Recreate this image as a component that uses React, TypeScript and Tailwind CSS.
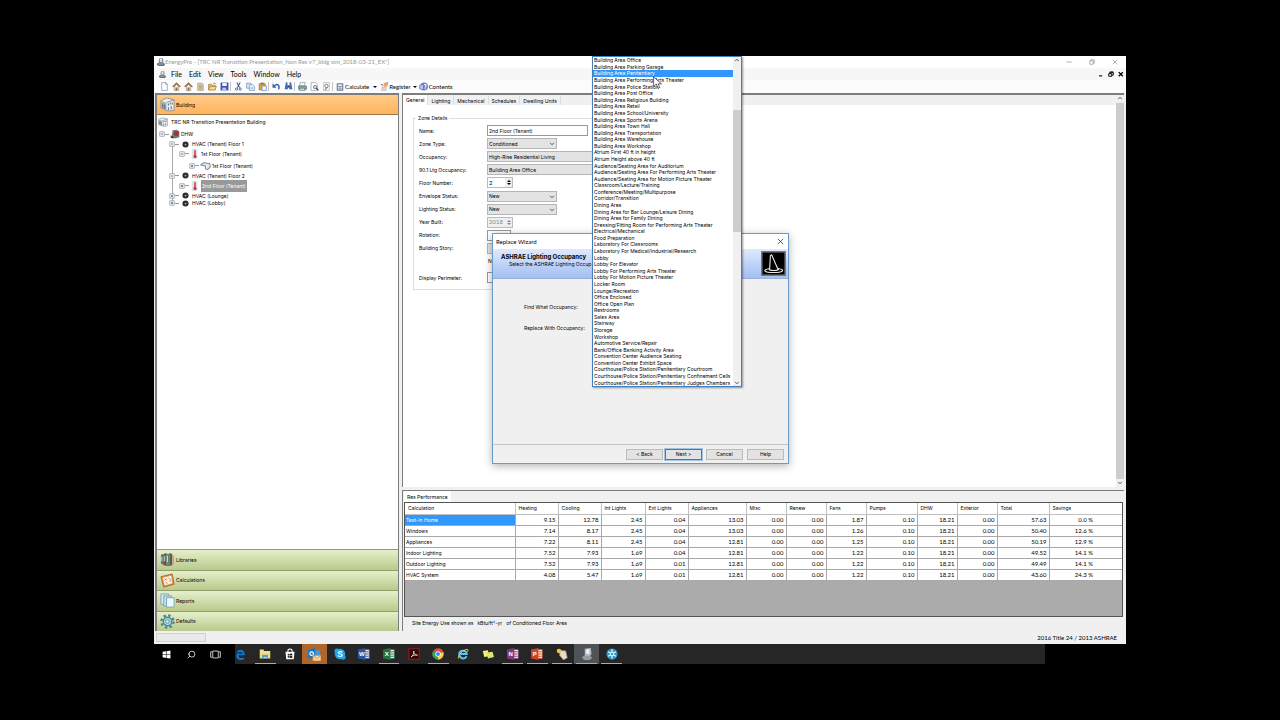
import type { ReactNode } from 'react'
import { Search } from 'lucide-react'

const occupancies = [
  'Building Area Office',
  'Building Area Parking Garage',
  'Building Area Penitentiary',
  'Building Area Performing Arts Theater',
  'Building Area Police Station',
  'Building Area Post Office',
  'Building Area Religious Building',
  'Building Area Retail',
  'Building Area School/University',
  'Building Area Sports Arena',
  'Building Area Town Hall',
  'Building Area Transportation',
  'Building Area Warehouse',
  'Building Area Workshop',
  'Atrium First 40 ft in height',
  'Atrium Height above 40 ft',
  'Audience/Seating Area for Auditorium',
  'Audience/Seating Area For Performing Arts Theater',
  'Audience/Seating Area for Motion Picture Theater',
  'Classroom/Lecture/Training',
  'Conference/Meeting/Multipurpose',
  'Corridor/Transition',
  'Dining Area',
  'Dining Area for Bar Lounge/Leisure Dining',
  'Dining Area for Family Dining',
  'Dressing/Fitting Room for Performing Arts Theater',
  'Electrical/Mechanical',
  'Food Preparation',
  'Laboratory For Classrooms',
  'Laboratory For Medical/Industrial/Research',
  'Lobby',
  'Lobby For Elevator',
  'Lobby For Performing Arts Theater',
  'Lobby For Motion Picture Theater',
  'Locker Room',
  'Lounge/Recreation',
  'Office Enclosed',
  'Office Open Plan',
  'Restrooms',
  'Sales Area',
  'Stairway',
  'Storage',
  'Workshop',
  'Automotive Service/Repair',
  'Bank/Office Banking Activity Area',
  'Convention Center Audience Seating',
  'Convention Center Exhibit Space',
  'Courthouse/Police Station/Penitentiary Courtroom',
  'Courthouse/Police Station/Penitentiary Confinement Cells',
  'Courthouse/Police Station/Penitentiary Judges Chambers',
]

const columns = [
  { name: 'Calculation', width: 'w-[110px]' },
  { name: 'Heating', width: 'w-[43px]' },
  { name: 'Cooling', width: 'w-[43px]' },
  { name: 'Int Lights', width: 'w-[44px]' },
  { name: 'Ext Lights', width: 'w-[43px]' },
  { name: 'Appliances', width: 'w-[58px]' },
  { name: 'Misc', width: 'w-[40px]' },
  { name: 'Renew', width: 'w-[40px]' },
  { name: 'Fans', width: 'w-[40px]' },
  { name: 'Pumps', width: 'w-[51px]' },
  { name: 'DHW', width: 'w-[40px]' },
  { name: 'Exterior', width: 'w-[40px]' },
  { name: 'Total', width: 'w-[52px]' },
  { name: 'Savings', width: '' },
]

const results = [
  ['Test-In Home', '9.15', '12.78', '2.45', '0.04', '13.03', '0.00', '0.00', '1.87', '0.10', '18.21', '0.00', '57.63', '0.0 %'],
  ['Windows', '7.14', '8.17', '2.45', '0.04', '13.03', '0.00', '0.00', '1.26', '0.10', '18.21', '0.00', '50.40', '12.6 %'],
  ['Appliances', '7.22', '8.11', '2.45', '0.04', '12.81', '0.00', '0.00', '1.25', '0.10', '18.21', '0.00', '50.19', '12.9 %'],
  ['Indoor Lighting', '7.52', '7.93', '1.69', '0.04', '12.81', '0.00', '0.00', '1.22', '0.10', '18.21', '0.00', '49.52', '14.1 %'],
  ['Outdoor Lighting', '7.52', '7.93', '1.69', '0.01', '12.81', '0.00', '0.00', '1.22', '0.10', '18.21', '0.00', '49.49', '14.1 %'],
  ['HVAC System', '4.08', '5.47', '1.69', '0.01', '12.81', '0.00', '0.00', '1.22', '0.10', '18.21', '0.00', '43.60', '24.3 %'],
]

const Svg = ({ className = 'size-[9px]', children }: { className?: string; children: ReactNode }) => (
  <svg viewBox="0 0 16 16" className={`shrink-0 ${className}`} fill="none" aria-hidden="true">
    {children}
  </svg>
)

const Chevron = ({ up = false, className = 'size-[6px]' }: { up?: boolean; className?: string }) => (
  <Svg className={className}>
    <path d={up ? 'M3 11l5-5 5 5' : 'M3 5l5 5 5-5'} stroke="#444" strokeWidth="2.4" />
  </Svg>
)

const AppIcon = ({ className }: { className?: string }) => (
  <Svg className={className}>
    <path d="M5 0h7l1 7-3 4H5L3 7z" fill="#8e99a5" />
    <path d="M6 1h4v7H6z" fill="#dfe5ea" />
    <path d="M0 11l4-2 8 0 4 3-2 4H4l-4-2z" fill="#5f6d79" />
    <path d="M3 12h9" stroke="#c6d0d8" strokeWidth="1.5" />
  </Svg>
)

const BuildingIcon = ({ className }: { className?: string }) => (
  <Svg className={className}>
    <path d="M1 4l6-3 8 2v11l-6 1-8-3z" fill="#e9edf0" stroke="#8a949c" />
    <path d="M1 4l6 2v9l-6-3z" fill="#aab3ba" />
    <path d="M7 6l8-3" stroke="#8a949c" />
    <path d="M9 7v2m2-3v2m2-2v2M9 11v3m3-4v3M3 7v5m2-4v5" stroke="#58646d" />
  </Svg>
)

const HomeIcon = ({ accent }: { accent: string }) => (
  <Svg>
    <path d="M4 8v7h8V8" fill="#e8dcc9" stroke="#8b7a67" />
    <path d="M1 8l7-7 7 7h-3L8 4 4 8z" fill={accent} stroke="#77502c" />
    <path d="M6.500 10h3v5h-3z" fill="#8a6a48" />
  </Svg>
)

const toolGroups: { label: string; icon: ReactNode }[][] = [
  [
    { label: 'New', icon: <Svg><path d="M3 1h7l3 3v11H3z" fill="#fff" stroke="#577a9c" /><path d="M10 1v3h3" stroke="#577a9c" /></Svg> },
    { label: 'New Building', icon: <HomeIcon accent="#c47a3a" /> },
    { label: 'Building Wizard', icon: <HomeIcon accent="#8a8d4a" /> },
    { label: 'Library', icon: <Svg><path d="M3 2h8l2 2v11H3z" fill="#d9ccb0" stroke="#968a70" /><path d="M5 6h6M5 8h6M5 10h6M5 12h6" stroke="#a4946f" /></Svg> },
    { label: 'Open', icon: <Svg><path d="M1 4h5l1 2h6v8H1z" fill="#e8b54a" stroke="#94712a" /><path d="M1 14l3-6h11l-3 6z" fill="#fbdc86" stroke="#94712a" /><path d="M9 3c2-2 4-1 5 1" stroke="#333" /></Svg> },
    { label: 'Save', icon: <Svg><path d="M1 1h14v14H1z" fill="#3f50b4" /><path d="M4 2h8v5H4z" fill="#fff" /><path d="M4 10h7v5H4z" fill="#b9c4ee" /></Svg> },
  ],
  [
    { label: 'Cut', icon: <Svg><path d="M5 1l5 9M11 1L6 10" stroke="#31507d" strokeWidth="1.800" /><circle cx="4.500" cy="12.500" r="2" stroke="#2e5cb5" strokeWidth="1.500" /><circle cx="11" cy="12.500" r="2" stroke="#2e5cb5" strokeWidth="1.500" /></Svg> },
    { label: 'Copy', icon: <Svg><path d="M1 2h7l2 2v7H1z" fill="#dce8fa" stroke="#4c72b8" /><path d="M6 5h6l3 3v7H6z" fill="#f3f8ff" stroke="#4c72b8" /><path d="M8 10h5M8 12h5" stroke="#6d94d8" /></Svg> },
    { label: 'Paste', icon: <Svg><path d="M2 3h11v11H2z" fill="#dba33f" stroke="#8e6522" /><path d="M5 1h5v3H5z" fill="#777" /><path d="M7 7h8v8H7z" fill="#eef4ff" stroke="#5471a6" /></Svg> },
  ],
  [
    { label: 'Undo', icon: <Svg><path d="M4 7c5-5 10-2 8 6" stroke="#2f61b8" strokeWidth="2.500" /><path d="M1 2v8h7z" fill="#2f61b8" /></Svg> },
    { label: 'Find', icon: <Svg><path d="M3 3h3l1 10H1zM10 3h3l2 10H9z" fill="#3b6ac0" /><path d="M6 6h4v4H6z" fill="#1f427f" /><path d="M3 1h3v2H3zM10 1h3v2h-3z" fill="#20396c" /></Svg> },
  ],
  [
    { label: 'Print', icon: <Svg><path d="M4 1h9l-2 6H3z" fill="#fff" stroke="#66808c" /><path d="M1 7h14v6H1z" fill="#8ba6ab" stroke="#476068" /><path d="M3 11h9v4H3z" fill="#cfe5ce" stroke="#476068" /></Svg> },
    { label: 'Print Preview', icon: <Svg><path d="M2 1h8l3 3v11H2z" fill="#fff" stroke="#7d8790" /><circle cx="9" cy="9" r="3" fill="#c5dcec" stroke="#3d4d58" /><path d="M11 11l4 4" stroke="#333" strokeWidth="2" /></Svg> },
    { label: 'Page Setup', icon: <Svg><path d="M3 1h10v14H3z" fill="#fff" stroke="#99a" /><circle cx="8" cy="7" r="3" stroke="#667" strokeWidth="1.500" /><path d="M10 9L5 14" stroke="#c2763a" strokeWidth="2" /></Svg> },
  ],
]

const Toolbar = () => (
  <div className="flex h-[13px] items-center pl-1 font-[Lato,sans-serif] text-[6px]">
    {toolGroups.map((group, i) => (
      <div key={i} className="flex items-center">
        {group.map((tool) => (
          <button key={tool.label} type="button" aria-label={tool.label} className="flex w-3 justify-center">
            {tool.icon}
          </button>
        ))}
        <span className="mr-px h-[9px] w-px bg-[#c5c5c5]" />
      </div>
    ))}
    <button type="button" className="flex items-center">
      <span className="flex w-[11px] justify-center">
        <Svg className="size-2">
          <path d="M2 1h12v14H2z" fill="#8e9bb0" stroke="#5d6a80" />
          <path d="M4 3h8v3H4z" fill="#e7eefb" />
          <path d="M4 9h8M4 12h8" stroke="#fff" strokeWidth="1.500" strokeDasharray="2 1" />
        </Svg>
      </span>
      Calculate
    </button>
    <span className="ml-1 border-x-2 border-t-2 border-x-transparent border-t-black" />
    <button type="button" className="ml-[3px] flex items-center">
      <Svg>
        <circle cx="10" cy="5" r="4" fill="#e8a56d" />
        <path d="M4 9l7 1-1 6H3z" fill="#dedbe6" stroke="#a4a0b0" />
        <path d="M2 4l3 2M12 1l2 1" stroke="#c95533" strokeWidth="2" />
      </Svg>
      Register
    </button>
    <span className="ml-[2px] border-x-2 border-t-2 border-x-transparent border-t-black" />
    <button type="button" className="ml-[2px] flex items-center gap-px">
      <Svg>
        <circle cx="9" cy="8" r="7" fill="#6f86cf" />
        <path d="M1 6l7-2v10l-7-2z" fill="#b9c6f0" stroke="#4a5ca8" />
        <path d="M9 5c4-2 5 2 2 4v1m0 1v2" stroke="#fff" strokeWidth="1.800" />
      </Svg>
      Contents
    </button>
  </div>
)

const TitleBar = () => (
  <header className="font-[Lato,sans-serif] text-[6px]">
    <div className="flex h-3 items-center bg-white pl-[3px] text-[#999]">
      <AppIcon className="size-2" />
      <span>EnergyPro - [TRC NR Transition Presentation_Non Res v7_bldg sim_2018-03-21_EX*]</span>
      <div className="ml-auto flex">
        <button type="button" aria-label="Minimize" className="flex w-[23px] justify-center">
          <Svg className="size-[6px]"><path d="M1 8h14" stroke="#999" strokeWidth="2" /></Svg>
        </button>
        <button type="button" aria-label="Restore" className="flex w-[23px] justify-center">
          <Svg className="size-[6px]"><path d="M2 5h9v9H2zM5 5V2h9v9h-3" stroke="#999" strokeWidth="2" /></Svg>
        </button>
        <button type="button" aria-label="Close" className="flex w-[23px] justify-center">
          <Svg className="size-[6px]"><path d="M2 2l12 12M14 2L2 14" stroke="#999" strokeWidth="2" /></Svg>
        </button>
      </div>
    </div>
    <div className="flex h-3 items-center bg-[#f7f7f7] pl-[5px]">
      <AppIcon className="size-[7px]" />
      <nav className="ml-[5px] flex gap-[7px] text-[7px]">
        {['File', 'Edit', 'View', 'Tools', 'Window', 'Help'].map((item) => (
          <button key={item} type="button">{item}</button>
        ))}
      </nav>
      <div className="ml-auto flex gap-[4px] pr-[2px]">
        <button type="button" aria-label="Minimize document">
          <Svg className="size-[6px]"><path d="M3 13h8" stroke="#000" strokeWidth="3" /></Svg>
        </button>
        <button type="button" aria-label="Restore document">
          <Svg className="size-[6px]"><path d="M2 7h8v7H2zM5 7V3h9v8h-4M5 3h9" stroke="#000" strokeWidth="2.500" /></Svg>
        </button>
        <button type="button" aria-label="Close document">
          <Svg className="size-[6px]"><path d="M2 3l11 11M13 3L2 14" stroke="#000" strokeWidth="3.500" /></Svg>
        </button>
      </div>
    </div>
  </header>
)

const Fan = () => (
  <Svg className="size-[7px]">
    <circle cx="8" cy="8" r="7" fill="#2d2d2d" />
    <circle cx="8" cy="8" r="2" fill="#aaa" />
  </Svg>
)

const Thermometer = () => (
  <Svg className="size-[10px]">
    <path d="M3 0h9v16H3z" fill="#dfe5ee" />
    <path d="M8 2v9" stroke="#d23b2e" strokeWidth="2.500" />
    <circle cx="8" cy="12" r="2.500" fill="#c9352b" />
  </Svg>
)

const Expander = ({ open = false }: { open?: boolean }) => (
  <span className="flex shrink-0 items-center">
    <Svg className="size-[6px]">
      <path d="M2 2h12v12H2z" fill="#fff" stroke="#8b96a5" strokeWidth="2" />
      <path d={open ? 'M5 8h6' : 'M5 8h6M8 5v6'} stroke="#33415c" strokeWidth="2" />
    </Svg>
    <span className="h-px w-1 bg-[#999]" />
  </span>
)

const treeRows: { label: string; row: string; icon: ReactNode; open?: boolean; selected?: boolean }[] = [
  {
    label: 'DHW',
    row: 'h-3 pl-[2px] gap-px',
    open: true,
    icon: (
      <Svg className="size-[10px]">
        <path d="M4 2l7-1 4 3v9l-7 2-5-3z" fill="#6e7b80" />
        <circle cx="10" cy="7" r="4" fill="#a8312e" />
        <path d="M1 10l6 3-2 2-4-1z" fill="#3c474c" />
      </Svg>
    ),
  },
  { label: 'HVAC (Tenant) Floor 1', row: 'h-2 pl-3 gap-[3px]', open: true, icon: <Fan /> },
  { label: '1st Floor (Tenant)', row: 'h-[11px] pl-[22px] gap-px', open: true, icon: <Thermometer /> },
  {
    label: '1st Floor (Tenant)',
    row: 'h-[13px] pl-[32px] gap-px',
    icon: (
      <Svg className="size-[11px]">
        <path d="M1 7l4-3 9 1 1 5-4 4-3-1V9z" fill="#e6eaee" stroke="#7c8d9b" strokeWidth="1.500" />
      </Svg>
    ),
  },
  { label: 'HVAC (Tenant) Floor 2', row: 'h-[7px] pl-3 gap-[3px]', open: true, icon: <Fan /> },
  { label: '2nd Floor (Tenant)', row: 'h-[13px] pl-[22px] gap-px', selected: true, icon: <Thermometer /> },
  { label: 'HVAC (Lounge)', row: 'h-[7px] pl-3 gap-[3px]', icon: <Fan /> },
  { label: 'HVAC (Lobby)', row: 'h-2 pl-3 gap-[3px]', icon: <Fan /> },
]

const sections = [
  {
    name: 'Libraries',
    icon: (
      <Svg className="size-[15px]">
        <path d="M1 3l3-1v12l-3-2z" fill="#4d6e7d" />
        <path d="M4 2l3-1v14l-3-1z" fill="#8c3f2f" />
        <path d="M7 2h3v13H7z" fill="#4b8e78" />
        <path d="M10 1l3 1v12l-3 1z" fill="#6b5a44" />
        <path d="M13 3l2 1v8l-2 2z" fill="#c9a684" />
        <path d="M2 5v5M5 4v6M8 4v7" stroke="#d5dfe2" />
      </Svg>
    ),
  },
  {
    name: 'Calculations',
    icon: (
      <Svg className="size-[15px]">
        <path d="M1 4l12-3 2 11-11 3z" fill="#e0994a" stroke="#a96a28" />
        <path d="M3 5l9-2 1 8-8 2z" fill="#fbf3e6" />
        <path d="M5 6l2 2m0-2L5 8m4-3l2 2M6 10l2 1m2-2l2-1" stroke="#c0705a" />
      </Svg>
    ),
  },
  {
    name: 'Reports',
    icon: (
      <Svg className="size-[15px]">
        <path d="M1 1h8v11H1z" fill="#d7ecf2" stroke="#79a6b5" />
        <path d="M4 3h8v11H4z" fill="#c2e0e8" stroke="#79a6b5" />
        <path d="M7 5h8v10H7z" fill="#eef8fa" stroke="#79a6b5" />
      </Svg>
    ),
  },
  {
    name: 'Defaults',
    icon: (
      <Svg className="size-[15px]">
        <circle cx="8" cy="8" r="6.500" stroke="#4a8795" strokeWidth="2.500" strokeDasharray="2.600 2.500" />
        <circle cx="8" cy="8" r="4.500" fill="#b8e0e6" stroke="#4a8795" strokeWidth="1.500" />
        <circle cx="8" cy="8" r="2" fill="#e4efc9" stroke="#4a8795" />
      </Svg>
    ),
  },
]

const Sidebar = () => (
  <aside className="flex w-[244px] shrink-0 flex-col border-t-2 border-r border-l-2 border-[#7d7d7d] bg-white">
    <button
      type="button"
      className="flex h-5 shrink-0 items-center gap-px border-b border-[#9b7b4d] bg-gradient-to-b from-[#ffcb87] to-[#ffb35c] pl-[3px]"
    >
      <BuildingIcon className="size-[15px]" />
      Building
    </button>
    <ul role="tree" className="relative flex-1 pt-px">
      <li role="treeitem" className="flex h-3 items-center gap-[3px] pl-px">
        <BuildingIcon className="size-[10px]" />
        TRC NR Transition Presentation Building
      </li>
      <span className="absolute top-[30px] left-[15px] h-[58px] w-px bg-[#aaa]" />
      {treeRows.map((node, i) => (
        <li key={i} role="treeitem" aria-selected={!!node.selected} className={`relative flex items-center ${node.row}`}>
          <Expander open={node.open} />
          {node.icon}
          {node.selected ? (
            <span className="bg-[#999] px-px py-[2px] text-white">{node.label}</span>
          ) : (
            <span>{node.label}</span>
          )}
        </li>
      ))}
    </ul>
    <div className="flex h-[82px] shrink-0 flex-col">
      {sections.map((section) => (
        <button
          key={section.name}
          type="button"
          className="flex flex-1 items-center gap-px border-t border-[#8f9e6c] bg-gradient-to-b from-[#e6efcb] to-[#b9ca8c] pl-[3px]"
        >
          {section.icon}
          {section.name}
        </button>
      ))}
    </div>
  </aside>
)

const Field = ({ id, label, children }: { id: string; label: string; children?: ReactNode }) => (
  <div className="flex flex-1 items-center">
    <label htmlFor={id} className="w-[68px] shrink-0">{label}</label>
    {children}
  </div>
)

const Dropdown = ({ id, value, width = 'w-[70px]' }: { id: string; value: string; width?: string }) => (
  <div className={`relative ${width}`}>
    <select id={id} className="block h-[11px] w-full appearance-none border border-[#b5b5b5] bg-[#e3e3e3] px-px">
      <option>{value}</option>
    </select>
    <Chevron className="pointer-events-none absolute top-[3px] right-[2px] size-[6px]" />
  </div>
)

const Spinner = ({ id, value, disabled = false }: { id: string; value: string; disabled?: boolean }) => (
  <div className={`flex h-[11px] w-[26px] border border-[#bbb] ${disabled ? 'bg-[#f0f0f0] text-[#888]' : 'bg-white'}`}>
    <input id={id} defaultValue={value} disabled={disabled} className="w-[17px] px-px font-[Lato,sans-serif] text-[6px] outline-none" />
    <span className="flex w-[7px] flex-col items-center justify-center gap-px bg-[#eee]">
      <span className="border-x-2 border-b-2 border-x-transparent border-b-current" />
      <span className="border-x-2 border-t-2 border-x-transparent border-t-current" />
    </span>
  </div>
)

const ZonePanel = () => (
  <section className="flex min-h-0 flex-1 border-t-2 border-l border-[#7d7d7d]">
    <div className="flex flex-1 flex-col bg-white">
      <div role="tablist" className="flex h-[10px] shrink-0 items-end bg-[#f0f0f0]">
        {['General', 'Lighting', 'Mechanical', 'Schedules', 'Dwelling Units'].map((tab, i) => (
          <button
            key={tab}
            type="button"
            role="tab"
            aria-selected={i === 0}
            className={`border-r border-[#ddd] px-[3px] ${i === 0 ? 'h-[10px] bg-white' : 'h-[9px]'}`}
          >
            {tab}
          </button>
        ))}
      </div>
      <fieldset className="mt-[9px] ml-[10px] w-[320px] border border-[#dedede] px-[5px] pb-[5px]">
        <legend className="-ml-[3px] px-[2px]">Zone Details</legend>
        <div className="flex h-[146px] flex-col pt-[2px]">
          <Field id="zone-name" label="Name:">
            <input id="zone-name" defaultValue="2nd Floor (Tenant)" className="h-[11px] w-[101px] border border-[#999] px-px outline-none" />
          </Field>
          <Field id="zone-type" label="Zone Type:">
            <Dropdown id="zone-type" value="Conditioned" />
          </Field>
          <Field id="zone-occupancy" label="Occupancy:">
            <Dropdown id="zone-occupancy" value="High-Rise Residential Living" width="w-[180px]" />
          </Field>
          <Field id="zone-ltg" label="90.1 Ltg Occupancy:">
            <Dropdown id="zone-ltg" value="Building Area Office" width="w-[180px]" />
          </Field>
          <Field id="zone-floor" label="Floor Number:">
            <Spinner id="zone-floor" value="2" />
          </Field>
          <Field id="zone-envelope" label="Envelope Status:">
            <Dropdown id="zone-envelope" value="New" />
          </Field>
          <Field id="zone-lighting" label="Lighting Status:">
            <Dropdown id="zone-lighting" value="New" />
          </Field>
          <Field id="zone-year" label="Year Built:">
            <Spinner id="zone-year" value="2018" disabled />
          </Field>
          <Field id="zone-rotation" label="Rotation:">
            <input id="zone-rotation" className="h-[11px] w-[24px] border border-[#999]" />
          </Field>
          <Field id="zone-story" label="Building Story:">
            <Dropdown id="zone-story" value="" />
          </Field>
          <div className="flex flex-1 items-center pl-[69px]">N</div>
        </div>
        <div className="flex h-4 flex-col pt-[3px]">
          <Field id="zone-perimeter" label="Display Perimeter:">
            <input id="zone-perimeter" className="h-[11px] w-[40px] border border-[#999]" />
          </Field>
        </div>
      </fieldset>
    </div>
    <div className="flex w-2 flex-col items-center bg-[#f0f0f0]">
      <Chevron up />
      <div className="mt-[2px] w-full flex-1 bg-[#cdcdcd]" />
      <Chevron className="my-px size-[6px]" />
    </div>
  </section>
)

const cellTone = (row: number, col: number) => {
  if (col > 0) return 'text-right font-[Lato,sans-serif] text-[6px]'
  return row === 0 ? 'bg-[#3297fd] text-white' : ''
}

const ResultsPanel = () => (
  <section className="mt-[3px] flex h-[141px] shrink-0 flex-col border-t border-l border-[#7d7d7d]">
    <div role="tablist" className="flex h-[11px] shrink-0 pl-px">
      <button type="button" role="tab" aria-selected className="bg-white px-[3px]">Res Performance</button>
    </div>
    <div className="mx-px min-h-0 flex-1 border border-[#555] bg-[#ababab]">
      <table className="w-full table-fixed border-collapse bg-white">
        <thead>
          <tr className="h-[11px]">
            {columns.map((column) => (
              <th key={column.name} className={`border-r border-b border-[#c0c0c0] py-0 pl-[3px] text-left font-normal last:border-r-0 ${column.width}`}>
                {column.name}
              </th>
            ))}
          </tr>
        </thead>
        <tbody>
          {results.map((row, r) => (
            <tr key={row[0]} className="h-[11px]">
              {row.map((cell, c) => (
                <td
                  key={c}
                  className={`border-r border-b border-[#a8a8a8] py-0 pr-[2px] pl-px last:border-r-0 last:pr-[29px] ${cellTone(r, c)}`}
                >
                  {cell}
                </td>
              ))}
            </tr>
          ))}
        </tbody>
      </table>
    </div>
    <p className="flex h-[14px] shrink-0 items-center gap-1 pb-[3px] pl-[9px]">
      <span>Site Energy Use shown as</span>
      <span>kBtu/ft²-yr</span>
      <span>of Conditioned Floor Area</span>
    </p>
  </section>
)

const WizardDialog = () => (
  <div
    role="dialog"
    aria-label="Replace Wizard"
    className="absolute top-[177px] left-[338px] flex h-[231px] w-[297px] flex-col border border-[#6b9bc8] bg-[#f0f0f0] shadow-[0_2px_8px_rgba(0,0,0,0.3)]"
  >
    <div className="flex h-[15px] shrink-0 items-center bg-white pr-1 pl-[3px] font-[Lato,sans-serif] text-[6px]">
      Replace Wizard
      <button type="button" aria-label="Close" className="ml-auto">
        <Svg className="size-[7px]"><path d="M2 2l12 12M14 2L2 14" stroke="#333" strokeWidth="1.800" /></Svg>
      </button>
    </div>
    <div className="flex h-[30px] shrink-0 items-center justify-between border-b border-[#9db1d8] bg-gradient-to-b from-[#dfe9fd] to-[#a3bff3] pr-[2px] pl-2">
      <div className="pb-[6px]">
        <h2 className="text-[6px] leading-[8px] font-bold">ASHRAE Lighting Occupancy</h2>
        <p className="pl-2 leading-[7px]">Select the ASHRAE Lighting Occup</p>
      </div>
      <Svg className="size-[25px]">
        <path d="M0 0h16v16H0z" fill="#777" />
        <path d="M1 1h14v14H1z" fill="#000" />
        <path d="M5.500 12L6 3l.8-.6L11 12M5.500 11.200c-5 1-3.500 2.600 2.500 2.600s8-1.600 3-2.600M5 11.800c2 1 4 1 6.500 0" stroke="#e8e8e8" strokeWidth=".7" />
      </Svg>
    </div>
    <div className="flex-1 pt-[24px] pl-[31px]">
      <p className="h-[21px]">Find What Occupancy:</p>
      <p>Replace With Occupancy:</p>
    </div>
    <div className="flex h-[19px] shrink-0 items-center justify-end gap-1 border-t border-[#c4c4c4] pr-1">
      <button type="button" className="-mr-[2px] h-[11px] w-[37px] border border-[#bbb] bg-[#e3e3e3]">&lt; Back</button>
      <button type="button" className="h-[11px] w-[37px] border border-[#2d7fd3] bg-[#e3e3e3] ring-1 ring-[#2d7fd3]/40">Next &gt;</button>
      <button type="button" className="h-[11px] w-[37px] border border-[#bbb] bg-[#e3e3e3]">Cancel</button>
      <button type="button" className="h-[11px] w-[37px] border border-[#bbb] bg-[#e3e3e3]">Help</button>
    </div>
  </div>
)

const OccupancyList = () => (
  <div className="absolute top-0 left-[438px] flex h-[331px] w-[150px] border border-[#3f7fbd] bg-white shadow-[1px_1px_2px_rgba(0,0,0,0.4)]">
    <ul role="listbox" aria-label="Replace With Occupancy" className="flex min-w-0 flex-1 flex-col">
      {occupancies.map((name, i) => (
        <li
          key={name}
          role="option"
          aria-selected={i === 2}
          className={`flex min-h-0 flex-1 items-center pl-px whitespace-nowrap ${i === 2 ? 'bg-[#3297fd] text-white' : ''}`}
        >
          {name}
        </li>
      ))}
    </ul>
    <div className="flex w-2 flex-col items-center bg-[#f0f0f0]">
      <Chevron up />
      <div className="mt-[47px] h-[122px] w-full bg-[#cdcdcd]" />
      <Chevron className="mt-auto size-[6px]" />
    </div>
    <Svg className="absolute top-[19px] left-[58px] size-[14px]">
      <path d="M3 1v11l3-3 2 5 2-1-2-4h4z" fill="#fff" stroke="#222" strokeWidth=".8" />
    </Svg>
  </div>
)

const OfficeIcon = ({ letter, color }: { letter: string; color: string }) => (
  <Svg className="size-[12px]">
    <path d="M8 2h7v12H8z" fill="#f3f3f3" stroke={color} />
    <path d="M10 5h4M10 8h4M10 11h4" stroke={color} strokeWidth="1.300" />
    <path d="M0 2l10-2v16L0 14z" fill={color} />
    <text x="5" y="11" textAnchor="middle" fontSize="8" fontWeight="700" fontFamily="Liberation Sans" fill="#fff">{letter}</text>
  </Svg>
)

const taskbarItems: { name: string; icon: ReactNode; state?: string }[] = [
  { name: 'Start', icon: <Svg className="size-[9px]"><path d="M1 3l6-1v5.500H1zM8 2l7-1v6.500H8zM1 8.500h6V14l-6-1zM8 8.500h7V15l-7-1z" fill="#fff" /></Svg> },
  { name: 'Search', icon: <Search className="size-[9px] -scale-x-100 text-white" /> },
  { name: 'Task View', icon: <Svg className="size-[11px]"><path d="M4 3h8v10H4zM3 4H1v8h2M13 4h2v8h-2" stroke="#ddd" strokeWidth="1.300" /></Svg> },
  { name: 'Edge', icon: <Svg className="size-[11px]"><path d="M14 9H5c0 5 5 5 8 3v3C6 18 1 14 2 9c1-3 3-4 5-5-4 0-5 2-6 4C2-1 15-2 14 9zM5 7h6c0-3-5-4-6 0z" fill="#0f78d4" /></Svg> },
  { name: 'File Explorer', state: 'open', icon: <Svg className="size-[12px]"><path d="M1 2h5l1 2h8v10H1z" fill="#f6dc83" /><path d="M4 9h8v5h-2v-2H6v2H4z" fill="#47a3d9" /></Svg> },
  { name: 'Store', icon: <Svg className="size-[12px]"><path d="M2 5h12l-1 10H3z" fill="#fff" /><path d="M5 5c0-5 6-5 6 0" stroke="#fff" strokeWidth="1.500" /><path d="M5 8l2.500-.3V10H5zM8 7.600l3-.4V10H8zM5 10.500h2.500V13L5 12.700zM8 10.500h3v3L8 13z" fill="#222" /></Svg> },
  {
    name: 'Outlook',
    state: 'alert',
    icon: (
      <Svg className="size-[13px]">
        <path d="M0 2l9-2v14l-9-2z" fill="#1477c9" />
        <circle cx="4.500" cy="7" r="2.200" stroke="#fff" strokeWidth="1.500" />
        <path d="M9 3h6v7H9z" fill="#3d9ae2" />
        <path d="M6 9h10v7H6z" fill="#f7d9a5" stroke="#c58a4e" />
        <path d="M6 9l5 4 5-4" stroke="#c58a4e" />
      </Svg>
    ),
  },
  {
    name: 'Skype',
    icon: (
      <Svg className="size-[12px]">
        <circle cx="8" cy="8" r="7" fill="#1ba8e8" />
        <circle cx="4" cy="4" r="3.500" fill="#1ba8e8" />
        <circle cx="12" cy="12" r="3.500" fill="#1ba8e8" />
        <text x="8" y="12" textAnchor="middle" fontSize="11" fontWeight="700" fontFamily="Liberation Sans" fill="#fff">S</text>
      </Svg>
    ),
  },
  { name: 'Word', icon: <OfficeIcon letter="W" color="#2b579a" /> },
  { name: 'Excel', state: 'open', icon: <OfficeIcon letter="X" color="#217346" /> },
  { name: 'Acrobat', icon: <Svg className="size-[12px]"><path d="M1 1h14v14H1z" fill="#300808" stroke="#8c1c1c" strokeWidth="1.500" /><path d="M4 12c3-2 4-5 3.500-8C8 8 10 10 12.500 9.500 9 9 6 10 4 12z" stroke="#eee" /></Svg> },
  {
    name: 'Chrome',
    state: 'open',
    icon: (
      <Svg className="size-[12px]">
        <path d="M8 8L1.500 4A7.500 7.500 0 0 1 15 5z" fill="#de4a3c" />
        <path d="M8 8V15.500A7.500 7.500 0 0 1 1.500 4z" fill="#37a35a" />
        <path d="M8 8l7-3a7.500 7.500 0 0 1-7 10.500z" fill="#f8cf3f" />
        <circle cx="8" cy="8" r="3.600" fill="#fff" />
        <circle cx="8" cy="8" r="2.700" fill="#4486e8" />
      </Svg>
    ),
  },
  {
    name: 'Internet Explorer',
    icon: (
      <Svg className="size-[12px]">
        <path d="M13 11c-3 5-10 3-10-3s9-6 10 0H5" stroke="#58c4f0" strokeWidth="2.600" />
        <path d="M2 14C0 11 9 1 14 2c1 0 1 1 0 3" stroke="#f3cd4c" strokeWidth="1.300" />
      </Svg>
    ),
  },
  { name: 'Sticky Notes', icon: <Svg className="size-[12px]"><path d="M1 4l7-1 1 8-6 1z" fill="#f7ec86" /><path d="M6 6l8-1 2 7-8 2z" fill="#d8e86c" /></Svg> },
  { name: 'OneNote', state: 'open', icon: <OfficeIcon letter="N" color="#80397b" /> },
  { name: 'PowerPoint', state: 'open', icon: <OfficeIcon letter="P" color="#d04423" /> },
  {
    name: 'Notes',
    state: 'open',
    icon: (
      <Svg className="size-[12px]">
        <path d="M5 3l8 1 2 9-5 3-5-6z" fill="#e7dccb" stroke="#9a8c78" />
        <circle cx="4" cy="4" r="3" fill="#f3c43f" />
      </Svg>
    ),
  },
  {
    name: 'EnergyPro',
    state: 'active',
    icon: (
      <Svg className="size-[12px]">
        <path d="M5 1l8-1 1 8-3 4-6-1z" fill="#b4bec8" />
        <path d="M7 2l4-.500v6H7z" fill="#eef2f5" />
        <path d="M1 12l4-2 8 1 2 2-3 3H4z" fill="#8f9ca8" />
      </Svg>
    ),
  },
  {
    name: 'Webinar',
    state: 'open',
    icon: (
      <Svg className="size-[12px]">
        <circle cx="8" cy="8" r="7.500" fill="#2b97cf" />
        <path d="M8 2v12M3 5l10 6M13 5L3 11" stroke="#fff" strokeWidth="1.600" />
        <circle cx="8" cy="8" r="2.200" fill="#2b97cf" stroke="#fff" />
      </Svg>
    ),
  },
]

const itemState = (state?: string) => {
  if (state === 'alert') return 'bg-[#b0662a]'
  if (state === 'active') return 'bg-[#505356]'
  return ''
}

const Taskbar = () => (
  <footer className="mr-[81px] flex h-5 shrink-0 bg-[linear-gradient(to_right,#000_81px,#262626_81px)]">
    <div className="flex w-[470px]">
      {taskbarItems.map((item) => (
        <button
          key={item.name}
          type="button"
          aria-label={item.name}
          className={`relative flex flex-1 items-center justify-center ${itemState(item.state)}`}
        >
          {item.icon}
          {item.state && item.state !== 'alert' && (
            <span className="absolute inset-x-[2px] bottom-0 h-px bg-[#76b9ed]" />
          )}
        </button>
      ))}
    </div>
  </footer>
)

export default function App() {
  return (
    <div className="flex h-screen flex-col bg-black px-[154px] py-14 font-[Inter,'Liberation_Sans',sans-serif] text-[5px] leading-[8px] text-black">
      <main className="relative flex min-h-0 flex-1 flex-col bg-[#f0f0f0]">
        <TitleBar />
        <div className="bg-[#fcfcfc]">
          <Toolbar />
        </div>
        <div className="flex min-h-0 flex-1 gap-[3px] pr-[2px] pl-px">
          <Sidebar />
          <div className="flex min-w-0 flex-1 flex-col">
            <ZonePanel />
            <ResultsPanel />
          </div>
        </div>
        <div className="flex h-[13px] shrink-0 items-center justify-between pr-[9px] pl-[2px]">
          <span className="h-[9px] w-[50px] border border-[#d0d0d0] bg-[#e9e9e9]" />
          <span className="font-[Lato,sans-serif] text-[6px]">2016 Title 24 / 2013 ASHRAE</span>
        </div>
        <WizardDialog />
        <OccupancyList />
      </main>
      <Taskbar />
    </div>
  )
}
